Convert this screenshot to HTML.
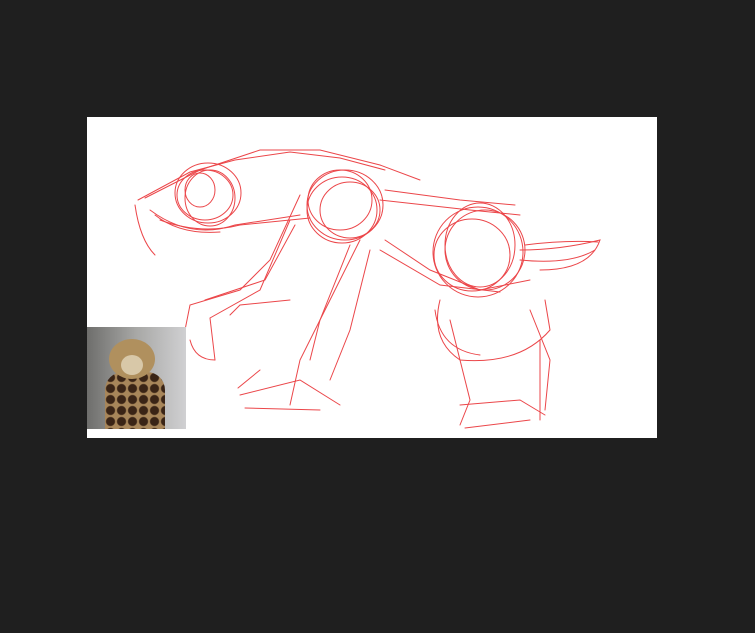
<!DOCTYPE html>
<html><head><style>
html,body{margin:0;padding:0;background:#1f1f1f;width:755px;height:633px;overflow:hidden}
#c{position:absolute;left:87px;top:117px;width:570px;height:321px;background:#fff}
#cam{position:absolute;left:87px;top:327px;width:99px;height:102px;background:linear-gradient(90deg,#6e6e6c,#a8a8a6 50%,#d0d0d2);overflow:hidden}
</style></head><body>
<div id="c"></div>
<svg width="755" height="633" style="position:absolute;left:0;top:0" fill="none" stroke="#e8262a" stroke-width="1" stroke-linecap="round" opacity="0.85">
<ellipse cx="205" cy="195" rx="28" ry="25"/><ellipse cx="208" cy="193" rx="33" ry="30"/><ellipse cx="200" cy="190" rx="15" ry="17"/><ellipse cx="210" cy="198" rx="25" ry="28"/>
<path d="M138 200 L190 172 L235 160 L290 152 L340 158 L385 170"/><path d="M145 198 L200 170 L260 150 L320 150 L380 165 L420 180"/>
<path d="M150 210 Q190 240 235 225 L300 215"/><path d="M160 220 Q200 235 240 225 L310 218"/>
<path d="M135 205 Q140 240 155 255"/><path d="M155 215 Q180 235 220 232"/>
<ellipse cx="345" cy="205" rx="38" ry="35"/><ellipse cx="340" cy="200" rx="32" ry="30"/><ellipse cx="350" cy="210" rx="30" ry="28"/><ellipse cx="342" cy="210" rx="35" ry="33"/>
<path d="M300 195 L270 260 L240 290 L190 305 L185 330"/><path d="M290 220 L260 290 L210 318 L215 360"/><path d="M295 225 L265 280 L205 300"/>
<path d="M380 200 L470 210 L520 215"/><path d="M385 190 L460 200 L515 205"/><path d="M385 240 L430 270 L480 290 L530 280"/><path d="M380 250 L440 285 L500 292"/>
<ellipse cx="478" cy="252" rx="45" ry="45"/><ellipse cx="485" cy="250" rx="40" ry="40"/><ellipse cx="472" cy="255" rx="38" ry="36"/><ellipse cx="480" cy="245" rx="35" ry="42"/>
<path d="M520 250 Q560 250 600 240 Q590 270 540 270"/><path d="M520 260 Q570 265 595 250"/><path d="M525 245 Q565 240 598 242"/>
<path d="M440 300 Q430 340 460 360 Q520 365 550 330 L545 300"/><path d="M435 310 Q440 350 480 355"/><path d="M450 320 L470 400 L460 425"/><path d="M540 340 L540 420"/><path d="M530 310 L550 360 L545 410"/>
<path d="M360 240 L330 300 L300 360 L290 405"/><path d="M370 250 L350 330 L330 380"/><path d="M350 245 L320 320 L310 360"/>
<path d="M240 395 L300 380 L340 405"/><path d="M245 408 L320 410"/><path d="M238 388 L260 370"/><path d="M460 405 L520 400 L545 415"/><path d="M465 428 L530 420"/>
<path d="M190 340 Q195 360 215 360"/><path d="M230 315 L240 305 L290 300"/>
</svg>
<div id="cam">
<div style="position:absolute;left:18px;top:45px;width:60px;height:62px;border-radius:18px 18px 0 0;background:radial-gradient(circle,#3a2416 0 4px,transparent 5px) 0 0/11px 11px,#a8865a"></div>
<div style="position:absolute;left:22px;top:12px;width:46px;height:40px;border-radius:50%;background:#b0905e"></div>
<div style="position:absolute;left:34px;top:28px;width:22px;height:20px;border-radius:50%;background:#d8c8a8"></div>
</div>
</body></html>
